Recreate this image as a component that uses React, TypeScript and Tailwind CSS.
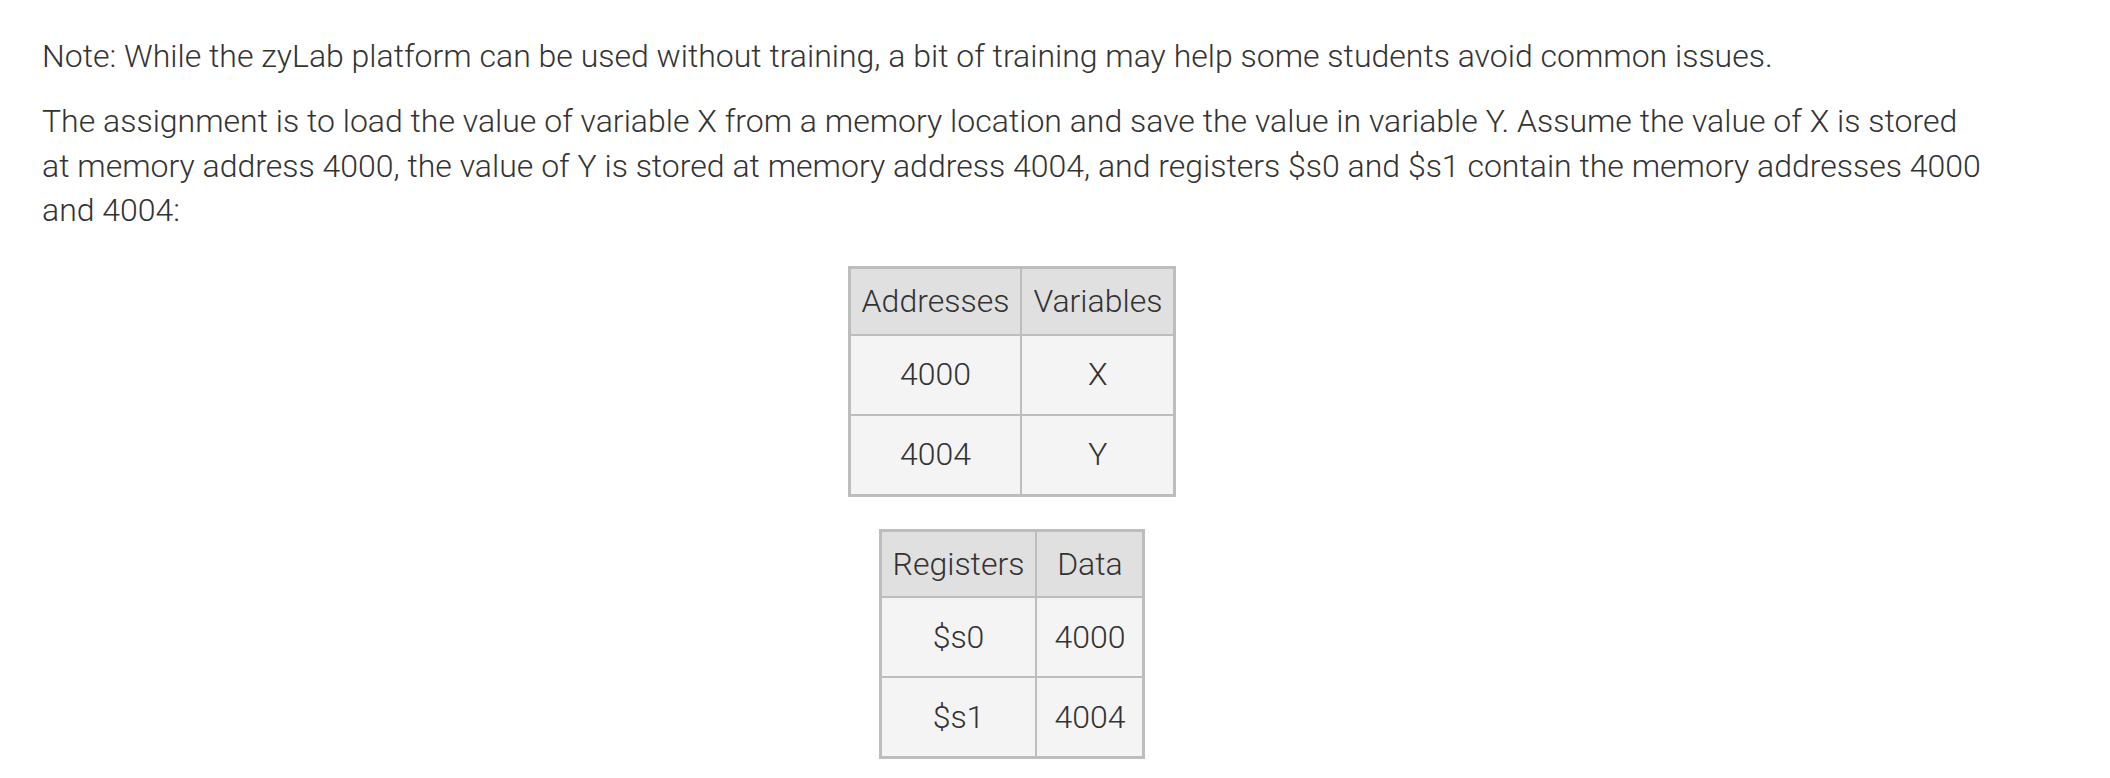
const addresses = [
  { addr: '4000', name: 'X' },
  { addr: '4004', name: 'Y' },
];

const registers = [
  { reg: '$s0', data: '4000' },
  { reg: '$s1', data: '4004' },
];

function Th({ children }: { children: React.ReactNode }) {
  return (
    <th className="border-2 border-[#bdbdbd] bg-[#e0e0e0] px-[11px] py-[10px] text-center font-light">
      {children}
    </th>
  );
}

function Td({ children }: { children: React.ReactNode }) {
  return (
    <td className="border-2 border-[#bdbdbd] bg-[#f4f4f4] px-[17px] py-[16.5px] text-center font-light">
      {children}
    </td>
  );
}

export default function App() {
  return (
    <div className="min-h-[778px] bg-white font-['Roboto','Liberation_Sans',sans-serif] text-[32px] font-light leading-[1.4] text-[#333333]">
      <div className="ml-[42px] w-[1940px] pt-[34px] pb-[19px]">
        <p className="mb-[20px]">
          Note: While the zyLab platform can be used without training, a bit of training may help some
          students avoid common issues.
        </p>
        <p>
          The assignment is to load the value of variable X from a memory location and save the value in
          variable Y. Assume the value of X is stored at memory address 4000, the value of Y is stored at
          memory address 4004, and registers $s0 and $s1 contain the memory addresses 4000 and 4004:
        </p>

        {/* addresses / variables */}
        <table className="mx-auto mt-[33px] border-collapse border-[3px] border-[#bdbdbd]">
          <thead>
            <tr>
              <Th>Addresses</Th>
              <Th>Variables</Th>
            </tr>
          </thead>
          <tbody>
            {addresses.map((r) => (
              <tr key={r.addr}>
                <Td>{r.addr}</Td>
                <Td>{r.name}</Td>
              </tr>
            ))}
          </tbody>
        </table>

        {/* registers / data */}
        <table className="mx-auto mt-[32px] border-collapse border-[3px] border-[#bdbdbd]">
          <thead>
            <tr>
              <Th>Registers</Th>
              <Th>Data</Th>
            </tr>
          </thead>
          <tbody>
            {registers.map((r) => (
              <tr key={r.reg}>
                <Td>{r.reg}</Td>
                <Td>{r.data}</Td>
              </tr>
            ))}
          </tbody>
        </table>
      </div>
    </div>
  );
}
